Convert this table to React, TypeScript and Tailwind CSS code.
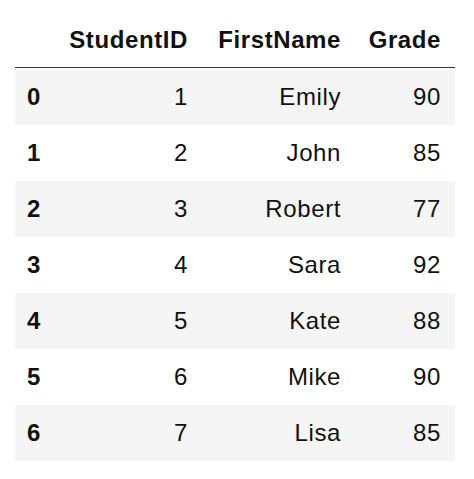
const rows = [
  ["0", "1", "Emily", "90"],
  ["1", "2", "John", "85"],
  ["2", "3", "Robert", "77"],
  ["3", "4", "Sara", "92"],
  ["4", "5", "Kate", "88"],
  ["5", "6", "Mike", "90"],
  ["6", "7", "Lisa", "85"],
];

export default function App() {
  return (
    <div
      className="w-[474px] h-[479px] bg-white text-[#111] text-[24px] tracking-[0.6px]"
      style={{ fontFamily: '"Liberation Sans", Arial, sans-serif' }}
    >
      <div className="ml-[15px] w-[440px]">
        <div className="flex h-[68px] items-center pt-[13px] font-bold border-b border-[#333]">
          <div className="w-[40px]" />
          <div className="w-[147px] text-right pr-[14px]">StudentID</div>
          <div className="w-[153px] text-right pr-[14px]">FirstName</div>
          <div className="w-[100px] text-right pr-[14px]">Grade</div>
        </div>
        <div className="pt-px">
          {rows.map((r, i) => (
            <div
              key={r[0]}
              className={`flex h-[56px] items-center ${i % 2 === 0 ? "bg-[#f5f5f5]" : "bg-white"}`}
            >
              <div className="w-[40px] pl-[12px] font-bold">{r[0]}</div>
              <div className="w-[147px] text-right pr-[14px]">{r[1]}</div>
              <div className="w-[153px] text-right pr-[14px]">{r[2]}</div>
              <div className="w-[100px] text-right pr-[14px]">{r[3]}</div>
            </div>
          ))}
        </div>
      </div>
    </div>
  );
}
